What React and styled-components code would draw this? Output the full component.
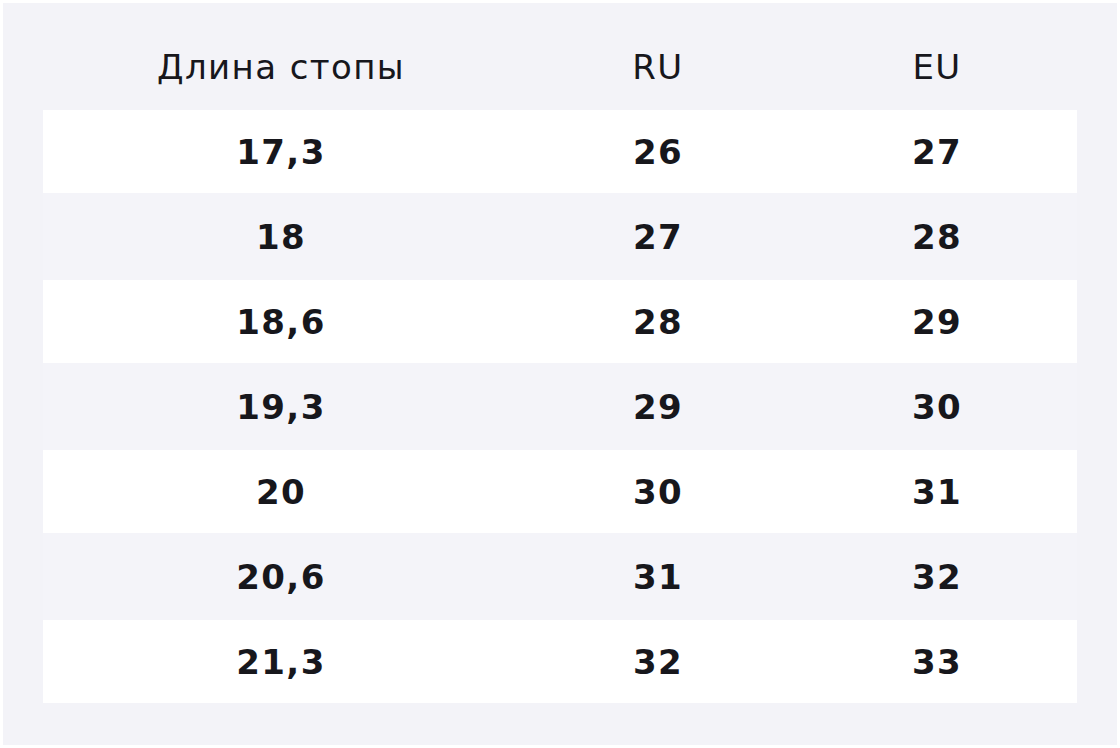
import React from 'react';
import styled, { createGlobalStyle } from 'styled-components';

const rows = [
    ['17,3', '26', '27'],
    ['18', '27', '28'],
    ['18,6', '28', '29'],
    ['19,3', '29', '30'],
    ['20', '30', '31'],
    ['20,6', '31', '32'],
    ['21,3', '32', '33'],
];

export default function App() {
    return (
        <>
            <GlobalStyle />
            <Page>
                <Panel>
                    <Row $kind='head'>
                        <Cell>Длина стопы</Cell>
                        <Cell>RU</Cell>
                        <Cell>EU</Cell>
                    </Row>
                    {
                        rows.map((item, index) => (
                            <Row key={item[0]} $kind={index % 2 === 0 ? 'white' : 'gray'}>
                                {item.map((value, col) => (
                                    <Cell key={col} $bold>{value}</Cell>
                                ))}
                            </Row>
                        ))
                    }
                </Panel>
            </Page>
        </>
    );
}

const GlobalStyle = createGlobalStyle`
    html, body {
        margin: 0;
        padding: 0;
        background: #ffffff;
    }
    body {
        font-family: "DejaVu Sans", "Liberation Sans", sans-serif;
    }
`;

const Page = styled.div`
    width: 1120px;
    height: 748px;
    padding: 3px;
    box-sizing: border-box;
`;

const Panel = styled.div`
    width: 1114px;
    height: 742px;
    box-sizing: border-box;
    background: #f3f3f8;
    padding: 21px 40px 0 40px;
    display: flex;
    flex-direction: column;
`;

const heights = { head: 86, white: 83, gray: 87 };

const Row = styled.div`
    display: grid;
    grid-template-columns: 476px 278px 1fr;
    align-items: center;
    height: ${p => heights[p.$kind]}px;
    background: ${p => (p.$kind === 'white' ? '#ffffff' : p.$kind === 'gray' ? '#f4f4f9' : 'transparent')};
`;

const Cell = styled.div`
    text-align: center;
    font-size: 34px;
    line-height: 1;
    letter-spacing: 1.4px;
    color: #17171c;
    font-weight: ${p => (p.$bold ? 700 : 400)};
`;
